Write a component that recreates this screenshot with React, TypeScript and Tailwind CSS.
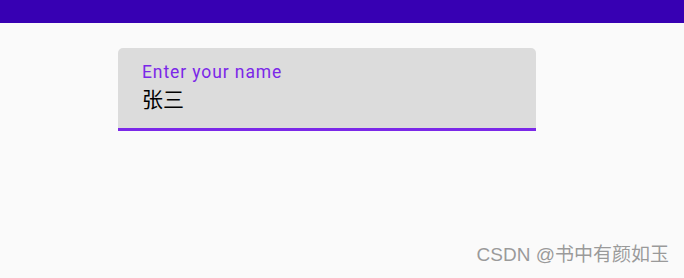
import React from "react";

export default function App() {
  return (
    <div className="relative h-[278px] w-[684px] overflow-hidden bg-[#fafafa] font-['Roboto','Noto_Sans_CJK_SC',sans-serif]">
      {/* Top app bar strip */}
      <div className="h-[23px] w-full bg-[#3700b3]" />

      <div className="flex justify-center pt-[25px]">
        <div className="ml-[-30px] flex h-[83px] w-[418px] flex-col rounded-t-[5px] bg-[#dcdcdc]">
          <div className="flex flex-1 flex-col pl-[24px] pt-[14px]">
            <span className="text-[17.5px] leading-[20px] tracking-[0.9px] text-[#7b28e8]">Enter your name</span>
            <span className="mt-[6px] text-[21px] leading-[24px] text-black">张三</span>
          </div>
          <div className="h-[3px] w-full bg-[#7b28e8]" />
        </div>
      </div>

      <div className="absolute bottom-[9px] right-[15px] font-['Liberation_Sans','Noto_Sans_CJK_SC',sans-serif] text-[19px] text-[#9a9a9a] [text-shadow:0_0_1px_#fff]">
        CSDN @书中有颜如玉
      </div>
    </div>
  );
}
